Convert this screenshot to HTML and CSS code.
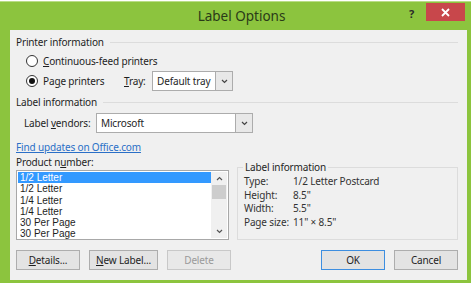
FILE: index.html
```html
<!DOCTYPE html>
<html>
<head>
<meta charset="utf-8">
<link rel="stylesheet" href="styles.css">
</head>
<body>
<div class="dialog">
  <div class="titlebar">
    <div class="title">Label Options</div>
    <div class="help">?</div>
    <div class="close">
      <svg width="9" height="9" viewBox="0 0 9 9"><path d="M1 1L8 8M8 1L1 8" stroke="#fff" stroke-width="1.8"/></svg>
    </div>
  </div>
  <div class="panel">
    <div class="group-head"><span>Printer information</span><i class="rule"></i></div>
    <div class="radio-row r1"><span class="radio"></span><span><u>C</u>ontinuous-feed printers</span></div>
    <div class="radio-row r2">
      <span class="radio on"></span><span class="pp">Pa<u>g</u>e printers</span>
      <span class="tray-label"><u>T</u>ray:</span>
      <div class="select tray"><span class="val">Default tray</span><span class="arrow"><svg width="7" height="5" viewBox="0 0 7 5"><path d="M1 1L3.5 3.5L6 1" stroke="#444" stroke-width="1.2" fill="none"/></svg></span></div>
    </div>
    <div class="group-head g2"><span>Label information</span><i class="rule"></i></div>
    <div class="vendor-row">
      <span class="vlabel">Label <u>v</u>endors:</span>
      <div class="select vendor"><span class="val">Microsoft</span><span class="arrow"><svg width="7" height="5" viewBox="0 0 7 5"><path d="M1 1L3.5 3.5L6 1" stroke="#444" stroke-width="1.2" fill="none"/></svg></span></div>
    </div>
    <div class="link">Find updates on Office.com</div>
    <div class="bottom">
      <div class="left">
        <div class="plabel">Product n<u>u</u>mber:</div>
        <div class="list">
          <div class="items">
            <div class="item sel">1/2 Letter</div>
            <div class="item">1/2 Letter</div>
            <div class="item">1/4 Letter</div>
            <div class="item">1/4 Letter</div>
            <div class="item">30 Per Page</div>
            <div class="item">30 Per Page</div>
          </div>
          <div class="scroll">
            <span class="sbtn"><svg width="7" height="5" viewBox="0 0 7 5"><path d="M1 4L3.5 1.5L6 4" stroke="#555" stroke-width="1.2" fill="none"/></svg></span>
            <span class="thumb"></span>
            <span class="track"></span>
            <span class="sbtn"><svg width="7" height="5" viewBox="0 0 7 5"><path d="M1 1L3.5 3.5L6 1" stroke="#555" stroke-width="1.2" fill="none"/></svg></span>
          </div>
        </div>
      </div>
      <fieldset class="info">
        <legend>Label information</legend>
        <div class="grid">
          <span>Type:</span><span>1/2 Letter Postcard</span>
          <span>Height:</span><span>8.5"</span>
          <span>Width:</span><span>5.5"</span>
          <span>Page size:</span><span>11" × 8.5"</span>
        </div>
      </fieldset>
    </div>
    <div class="buttons">
      <div class="btn"><u>D</u>etails...</div>
      <div class="btn"><u>N</u>ew Label...</div>
      <div class="btn disabled">Delete</div>
      <div class="spacer"></div>
      <div class="btn ok">OK</div>
      <div class="btn">Cancel</div>
    </div>
  </div>
</div>
</body>
</html>
```

FILE: styles.css
```css
* { box-sizing: border-box; }
html, body { margin: 0; padding: 0; }
body {
  width: 474px;
  height: 284px;
  background: #fff;
  font-family: "Noto Sans", "Open Sans", sans-serif;
  font-size: 10px;
  letter-spacing: -0.15px;
  color: #1e1e1e;
  overflow: hidden;
}
u { text-decoration: underline; text-underline-offset: 1px; }
.dialog {
  width: 471px;
  height: 282px;
  margin-top: 1px;
  background: #8cc43e;
  border-top: 1px solid #b9dd86;
  display: flex;
  flex-direction: column;
}
.titlebar {
  height: 28px;
  position: relative;
  display: flex;
  align-items: flex-start;
}
.title {
  position: absolute;
  left: 12px; right: 0;
  top: 5px;
  text-align: center;
  font-size: 13.5px;
  letter-spacing: 0;
  color: #2a3a18;
}
.help {
  margin-left: auto;
  margin-top: 4px;
  font-weight: bold;
  font-size: 11px;
  color: #2a2a2a;
  width: 12px;
}
.close {
  margin-left: 5px;
  margin-right: 6px;
  width: 39px;
  height: 18px;
  margin-top: 1px;
  background: #c8474b;
  display: flex;
  align-items: center;
  justify-content: center;
}
.panel {
  margin: 0 4px 3px 10px;
  flex: 1;
  background: #f0f0f0;
  padding: 5px 9px 0 6px;
  display: flex;
  flex-direction: column;
}
.group-head {
  display: flex;
  align-items: center;
  height: 14px;
  gap: 6px;
}
.rule { flex: 1; border-top: 1px solid #dcdcdc; height: 0; }
.g2 { margin-top: 4px; }
.radio-row {
  display: flex;
  align-items: center;
  height: 20px;
}
.r1 { margin-top: 2px; padding-left: 10px; }
.r2 { padding-left: 10px; }
.radio {
  width: 12px; height: 12px;
  border-radius: 50%;
  border: 1px solid #333;
  background: #fff;
  margin-right: 5px;
  position: relative;
}
.radio.on::after {
  content: "";
  position: absolute;
  left: 2px; top: 2px;
  width: 6px; height: 6px;
  border-radius: 50%;
  background: #111;
}
.pp { width: 81px; }
.tray-label { width: 28px; }
.select {
  height: 20px;
  background: #fff;
  border: 1px solid #acacac;
  display: flex;
  align-items: center;
}
.select .val { flex: 1; padding-left: 4px; }
.select .arrow {
  width: 17px;
  height: 18px;
  border-left: 1px solid #acacac;
  background: #e8e8e8;
  display: flex;
  align-items: center;
  justify-content: center;
}
.tray { width: 81px; }
.vendor-row {
  display: flex;
  align-items: center;
  margin-top: 4px;
  padding-left: 8px;
}
.vlabel { width: 72px; }
.vendor { width: 157px; }
.link {
  margin-top: 7px;
  height: 14px;
  color: #2a6fc7;
  text-decoration: underline;
}
.bottom {
  display: flex;
  margin-top: 1px;
}
.left { width: 213px; }
.plabel { height: 15px; }
.list {
  height: 70px;
  border: 1px solid #a8a8a8;
  background: #fff;
  display: flex;
  padding: 1px;
}
.items { flex: 1; }
.item {
  height: 11.3px;
  line-height: 11.3px;
  padding-left: 2px;
  font-family: "Liberation Sans", "Noto Sans", sans-serif;
  font-size: 10px;
  letter-spacing: 0;
  overflow: hidden;
}
.item.sel { background: #3399ff; color: #fff; }
.scroll {
  width: 16px;
  display: flex;
  flex-direction: column;
  background: #f0f0f0;
}
.sbtn { height: 13px; display: flex; align-items: center; justify-content: center; }
.thumb { height: 14px; background: #cdcdcd; margin: 0 1px; }
.track { flex: 1; }
.info {
  margin: 6px 0 0 8px;
  flex: 1;
  height: 79px;
  border: 1px solid #dcdcdc;
  padding: 2px 0 0 6px;
}
.info legend { padding: 0 2px; margin-left: -1px; line-height: 12px; }
.grid {
  display: grid;
  grid-template-columns: 49px auto;
  row-gap: 1.7px;
  color: #333;
  line-height: 12px;
}
.buttons {
  display: flex;
  margin-top: 10px;
  gap: 9px;
}
.spacer { flex: 1; }
.btn {
  width: 64px;
  height: 20px;
  border: 1px solid #adadad;
  background: #e3e3e3;
  display: flex;
  align-items: center;
  justify-content: center;
}
.btn:nth-child(2) { width: 69px; }
.btn.disabled { color: #9a9a9a; border-color: #c8c8c8; background: #e8e8e8; }
.btn.ok { border-color: #3d8ee0; }
```
